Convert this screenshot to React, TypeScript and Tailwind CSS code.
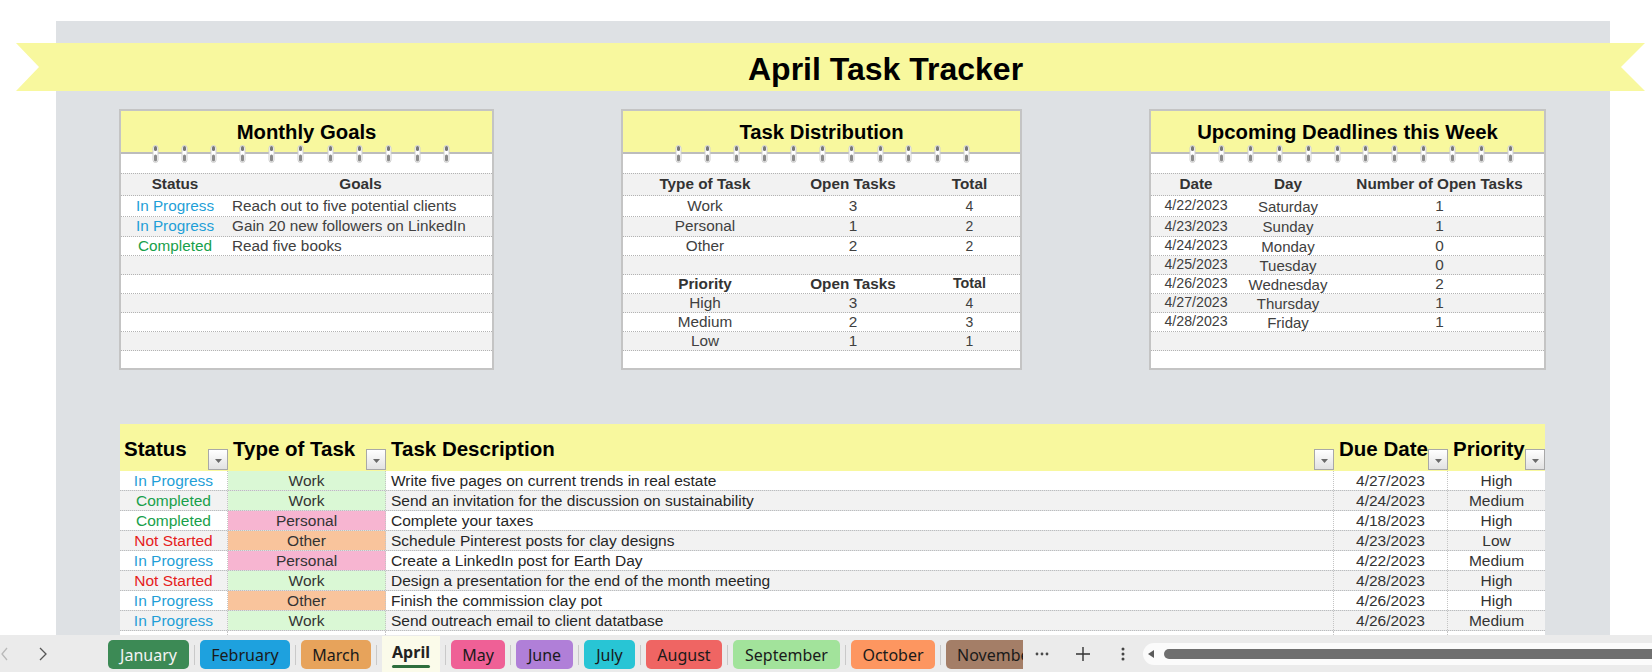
import React from "react";

const STATUS_COLOR: Record<string, string> = {
  "In Progress": "text-[#1f9fd7]",
  Completed: "text-[#17a04a]",
  "Not Started": "text-[#e6201b]",
};

const TYPE_BG: Record<string, string> = {
  Work: "bg-[#daf8d5]",
  Personal: "bg-[#f7b5d1]",
  Other: "bg-[#f9c49c]",
};

const ROW_H = [
  "h-[23px] border-t",
  "h-[21px]",
  "h-[20px]",
  "h-[19px]",
  "h-[19px]",
  "h-[19px]",
  "h-[19px]",
  "h-[19px]",
  "h-[19px]",
];

function Ring() {
  return (
    <svg width="7" height="18" viewBox="0 0 7 18">
      <rect x="1" y="0.5" width="5" height="17" rx="2.5" fill="#ffffff" stroke="#cfcfcf" />
      <rect x="2" y="1" width="3" height="5" rx="1.5" fill="#777777" />
      <rect x="2" y="9.5" width="3" height="7" rx="1.5" fill="#8b8b8b" />
    </svg>
  );
}

function Card({
  title,
  count,
  ringClass,
  widthClass,
  children,
}: {
  title: string;
  count: number;
  ringClass: string;
  widthClass: string;
  children: React.ReactNode;
}) {
  return (
    <div className={`relative flex flex-col border-2 border-[#c4c4c4] bg-white h-full shrink-0 ${widthClass}`}>
      <div className="h-[43px] shrink-0 bg-[#f8f89e] border-b-2 border-[#bcbcbc] flex items-center justify-center text-[20.3px] font-bold text-black leading-none pt-[2px]">
        {title}
      </div>
      <div className="h-[19px] shrink-0" />
      {children}
      <div className="flex-1" />
      <div className={`absolute top-[34px] flex justify-between ${ringClass}`}>
        {Array.from({ length: count }).map((_, i) => (
          <Ring key={i} />
        ))}
      </div>
    </div>
  );
}

function CardRow({ i, children }: { i: number; children: React.ReactNode }) {
  return (
    <div
      className={`flex shrink-0 items-center border-b border-dotted border-[#b3b3b3] ${ROW_H[i]} ${
        i % 2 === 0 ? "bg-[#f2f2f2]" : "bg-white"
      }`}
    >
      {children}
    </div>
  );
}

function FilterBtn() {
  return (
    <div className="w-[20px] h-[21px] shrink-0 self-end mb-[1px] border border-[#a8a8a8] bg-linear-to-b from-white to-[#e2e2e2] flex items-center justify-center pt-[3px]">
      <svg width="7" height="4" viewBox="0 0 7 4">
        <path d="M0 0H7L3.5 4Z" fill="#6a6a6a" />
      </svg>
    </div>
  );
}

const goals: [string, string][] = [
  ["In Progress", "Reach out to five potential clients"],
  ["In Progress", "Gain 20 new followers on LinkedIn"],
  ["Completed", "Read five books"],
  ["", ""],
  ["", ""],
  ["", ""],
  ["", ""],
  ["", ""],
];

const deadlines: [string, string, string][] = [
  ["4/22/2023", "Saturday", "1"],
  ["4/23/2023", "Sunday", "1"],
  ["4/24/2023", "Monday", "0"],
  ["4/25/2023", "Tuesday", "0"],
  ["4/26/2023", "Wednesday", "2"],
  ["4/27/2023", "Thursday", "1"],
  ["4/28/2023", "Friday", "1"],
  ["", "", ""],
];

const tasks: [string, string, string, string, string][] = [
  ["In Progress", "Work", "Write five pages on current trends in real estate", "4/27/2023", "High"],
  ["Completed", "Work", "Send an invitation for the discussion on sustainability", "4/24/2023", "Medium"],
  ["Completed", "Personal", "Complete your taxes", "4/18/2023", "High"],
  ["Not Started", "Other", "Schedule Pinterest posts for clay designs", "4/23/2023", "Low"],
  ["In Progress", "Personal", "Create a LinkedIn post for Earth Day", "4/22/2023", "Medium"],
  ["Not Started", "Work", "Design a presentation for the end of the month meeting", "4/28/2023", "High"],
  ["In Progress", "Other", "Finish the commission clay pot", "4/26/2023", "High"],
  ["In Progress", "Work", "Send outreach email to client datatbase", "4/26/2023", "Medium"],
];

const tabs: { name: string; cls: string }[] = [
  { name: "January", cls: "w-[81px] bg-[#3c8a55] text-[#f4f4f4]" },
  { name: "February", cls: "w-[90px] bg-[#1ea1de] text-[#1a1a1a]" },
  { name: "March", cls: "w-[70px] bg-[#e7a35b] text-[#1a1a1a]" },
  { name: "April", cls: "active" },
  { name: "May", cls: "w-[54px] bg-[#ef6096] text-[#1a1a1a]" },
  { name: "June", cls: "w-[57px] bg-[#b07fd8] text-[#1a1a1a]" },
  { name: "July", cls: "w-[51px] bg-[#28c5d5] text-[#1a1a1a]" },
  { name: "August", cls: "w-[76px] bg-[#ef6563] text-[#1a1a1a]" },
  { name: "September", cls: "w-[107px] bg-[#a2e39b] text-[#1a1a1a]" },
  { name: "October", cls: "w-[84px] bg-[#fd9660] text-[#1a1a1a]" },
  { name: "November", cls: "w-[96px] bg-[#a47e67] text-[#1a1a1a] justify-start pl-[11px]" },
];

export default function App() {
  return (
    <div className="w-[1652px] h-[672px] bg-white flex flex-col overflow-hidden [font-family:'Liberation_Sans',Arial,sans-serif]">
      <div className="h-[21px] shrink-0" />
      {/* Sheet */}
      <div className="ml-[56px] w-[1554px] h-[614px] shrink-0 bg-[#dee1e4] flex flex-col pt-[22px]">
        {/* Banner */}
        <div className="ml-[-40px] mr-[-35px] h-[48px] shrink-0 bg-[#f8f89e] [clip-path:polygon(0_0,100%_0,calc(100%_-_24px)_50%,100%_100%,0_100%,23px_50%)] flex items-center pl-[732px] pt-[3px]">
          <span className="text-[32px] font-bold text-black leading-none">April Task Tracker</span>
        </div>

        {/* Cards */}
        <div className="mt-[18px] h-[261px] shrink-0 flex">
          <div className="ml-[63px] h-full">
            <Card title="Monthly Goals" count={11} ringClass="left-[31px] w-[298px]" widthClass="w-[375px]">
              <CardRow i={0}>
                <div className="w-[108px] text-center text-[15.3px] font-bold text-[#333333]">Status</div>
                <div className="flex-1 text-center text-[15.3px] font-bold text-[#333333]">Goals</div>
              </CardRow>
              {goals.map((g, idx) => (
                <CardRow key={idx} i={idx + 1}>
                  <div className={`w-[108px] text-center text-[15.3px] ${STATUS_COLOR[g[0]] ?? ""}`}>{g[0]}</div>
                  <div className="flex-1 pl-[3px] text-[15.3px] text-[#404040] whitespace-nowrap">{g[1]}</div>
                </CardRow>
              ))}
            </Card>
          </div>

          <div className="ml-[127px] h-full">
            <Card title="Task Distribution" count={11} ringClass="left-[52px] w-[295px]" widthClass="w-[401px]">
              <CardRow i={0}>
                <div className="w-[164px] text-center text-[15.3px] font-bold text-[#333333]">Type of Task</div>
                <div className="w-[132px] text-center text-[15.3px] font-bold text-[#333333]">Open Tasks</div>
                <div className="flex-1 text-center text-[15.3px] font-bold text-[#333333]">Total</div>
              </CardRow>
              {[
                ["Work", "3", "4"],
                ["Personal", "1", "2"],
                ["Other", "2", "2"],
              ].map((r, idx) => (
                <CardRow key={r[0]} i={idx + 1}>
                  <div className="w-[164px] text-center text-[15.3px] text-[#404040]">{r[0]}</div>
                  <div className="w-[132px] text-center text-[15.3px] text-[#404040]">{r[1]}</div>
                  <div className="flex-1 text-center text-[14px] text-[#404040]">{r[2]}</div>
                </CardRow>
              ))}
              <CardRow i={4}>
                <div />
              </CardRow>
              <CardRow i={5}>
                <div className="w-[164px] text-center text-[15.3px] font-bold text-[#333333]">Priority</div>
                <div className="w-[132px] text-center text-[15.3px] font-bold text-[#333333]">Open Tasks</div>
                <div className="flex-1 text-center text-[14.3px] font-bold text-[#333333]">Total</div>
              </CardRow>
              {[
                ["High", "3", "4"],
                ["Medium", "2", "3"],
                ["Low", "1", "1"],
              ].map((r, idx) => (
                <CardRow key={r[0]} i={idx + 6}>
                  <div className="w-[164px] text-center text-[15.3px] text-[#404040]">{r[0]}</div>
                  <div className="w-[132px] text-center text-[15.3px] text-[#404040]">{r[1]}</div>
                  <div className="flex-1 text-center text-[14px] text-[#404040]">{r[2]}</div>
                </CardRow>
              ))}
            </Card>
          </div>

          <div className="ml-[127px] h-full">
            <Card title="Upcoming Deadlines this Week" count={12} ringClass="left-[38px] w-[325px]" widthClass="w-[397px]">
              <CardRow i={0}>
                <div className="w-[90px] text-center text-[15.3px] font-bold text-[#333333]">Date</div>
                <div className="w-[94px] text-center text-[15.3px] font-bold text-[#333333]">Day</div>
                <div className="flex-1 text-center text-[15.3px] font-bold text-[#333333] whitespace-nowrap">Number of Open Tasks</div>
              </CardRow>
              {deadlines.map((d, idx) => (
                <CardRow key={idx} i={idx + 1}>
                  <div className="w-[90px] text-center text-[14.2px] text-[#404040]">{d[0]}</div>
                  <div className="w-[94px] text-center text-[15px] text-[#404040] pt-[2px]">{d[1]}</div>
                  <div className="flex-1 text-center text-[15.3px] text-[#404040]">{d[2]}</div>
                </CardRow>
              ))}
            </Card>
          </div>
        </div>

        {/* Task table */}
        <div className="mt-[54px] ml-[64px] w-[1425px] flex-1 flex flex-col min-h-0">
          <div className="h-[47px] shrink-0 bg-[#f8f89e] flex text-[20.5px] font-bold text-black leading-none whitespace-nowrap">
            <div className="w-[108px] flex pl-[4px]">
              <span className="flex-1 self-center pt-[3px]">Status</span>
              <FilterBtn />
            </div>
            <div className="w-[158px] flex pl-[5px]">
              <span className="flex-1 self-center pt-[3px]">Type of Task</span>
              <FilterBtn />
            </div>
            <div className="flex-1 flex pl-[5px]">
              <span className="flex-1 self-center pt-[3px]">Task Description</span>
              <FilterBtn />
            </div>
            <div className="w-[114px] flex pl-[5px]">
              <span className="flex-1 self-center pt-[3px]">Due Date</span>
              <FilterBtn />
            </div>
            <div className="w-[97px] flex pl-[5px]">
              <span className="flex-1 self-center pt-[3px]">Priority</span>
              <FilterBtn />
            </div>
          </div>
          {tasks.map((t, idx) => {
            const bg = idx % 2 === 1 ? "bg-[#f2f2f2]" : "bg-white";
            return (
              <div
                key={idx}
                className="h-[20px] shrink-0 flex border-b border-dotted border-[#bdbdbd] text-[15.5px] leading-[19px] whitespace-nowrap"
              >
                <div className={`w-[108px] text-center border-r border-dotted border-[#c4c4c4] ${bg} ${STATUS_COLOR[t[0]]}`}>
                  {t[0]}
                </div>
                <div className={`w-[158px] text-center border-r border-dotted border-[#c4c4c4] text-[#333333] ${TYPE_BG[t[1]]}`}>
                  {t[1]}
                </div>
                <div className={`flex-1 pl-[5px] border-r border-dotted border-[#c4c4c4] text-[#262626] ${bg}`}>{t[2]}</div>
                <div className={`w-[114px] text-center border-r border-dotted border-[#c4c4c4] text-[#333333] ${bg}`}>{t[3]}</div>
                <div className={`w-[97px] text-center text-[#333333] ${bg}`}>{t[4]}</div>
              </div>
            );
          })}
          <div className="flex-1 flex">
            <div className="w-[108px] bg-white border-r border-dotted border-[#c4c4c4]" />
            <div className="w-[158px] bg-white border-r border-dotted border-[#c4c4c4]" />
            <div className="flex-1 bg-white border-r border-dotted border-[#c4c4c4]" />
            <div className="w-[114px] bg-white border-r border-dotted border-[#c4c4c4]" />
            <div className="w-[97px] bg-white" />
          </div>
        </div>
      </div>

      {/* Tab bar */}
      <div className="h-[37px] shrink-0 bg-[#ebebeb] flex [font-family:'Noto_Sans','Open_Sans',sans-serif]">
        <div className="w-[108px] shrink-0 flex items-center">
          <svg width="108" height="37" viewBox="0 0 108 37">
            <polyline points="7,13 2,19 7,25" fill="none" stroke="#b9b9b9" strokeWidth="1.3" />
            <polyline points="40,13 46,19 40,25" fill="none" stroke="#555555" strokeWidth="1.3" />
          </svg>
        </div>
        <div className="w-[915px] shrink-0 overflow-hidden flex items-start pt-[5px]">
          {tabs.map((tab, idx) => (
            <React.Fragment key={tab.name}>
              {idx > 0 && <div className="w-[1px] h-[20px] mx-[5px] mt-[5px] shrink-0 bg-[#c9c9c9]" />}
              {tab.cls === "active" ? (
                <div className="w-[58px] h-[36px] mt-[-4px] shrink-0 bg-[#fbfbea] flex flex-col items-center pt-[6px]">
                  <span className="text-[16px] font-bold text-[#222222] leading-[20px]">April</span>
                  <div className="w-[38px] h-[3px] mt-[3px] rounded-full bg-[#2d6e3d]" />
                </div>
              ) : (
                <div
                  className={`h-[29px] shrink-0 rounded-[5px] flex items-center justify-center text-[16px] leading-none ${tab.cls}`}
                >
                  {tab.name}
                </div>
              )}
            </React.Fragment>
          ))}
        </div>
        <div className="w-[38px] shrink-0 flex items-center justify-center">
          <svg width="14" height="4" viewBox="0 0 14 4">
            <circle cx="2" cy="2" r="1.4" fill="#4a4a4a" />
            <circle cx="7" cy="2" r="1.4" fill="#4a4a4a" />
            <circle cx="12" cy="2" r="1.4" fill="#4a4a4a" />
          </svg>
        </div>
        <div className="w-[44px] shrink-0 flex items-center justify-center">
          <svg width="16" height="16" viewBox="0 0 16 16">
            <path d="M8 1V15M1 8H15" stroke="#333333" strokeWidth="1.4" />
          </svg>
        </div>
        <div className="w-[36px] shrink-0 flex items-center justify-center">
          <svg width="4" height="16" viewBox="0 0 4 16">
            <circle cx="2" cy="3" r="1.5" fill="#444444" />
            <circle cx="2" cy="8" r="1.5" fill="#444444" />
            <circle cx="2" cy="13" r="1.5" fill="#444444" />
          </svg>
        </div>
        <div className="ml-[2px] mr-[-40px] flex-1 h-[22px] self-center bg-[#fbfbfb] rounded-full flex items-center pl-[5px]">
          <svg width="6" height="8" viewBox="0 0 6 8">
            <path d="M6 0V8L0 4Z" fill="#5a5a5a" />
          </svg>
          <div className="ml-[10px] flex-1 h-[10px] rounded-full bg-[#6f6f6f]" />
        </div>
      </div>
    </div>
  );
}
